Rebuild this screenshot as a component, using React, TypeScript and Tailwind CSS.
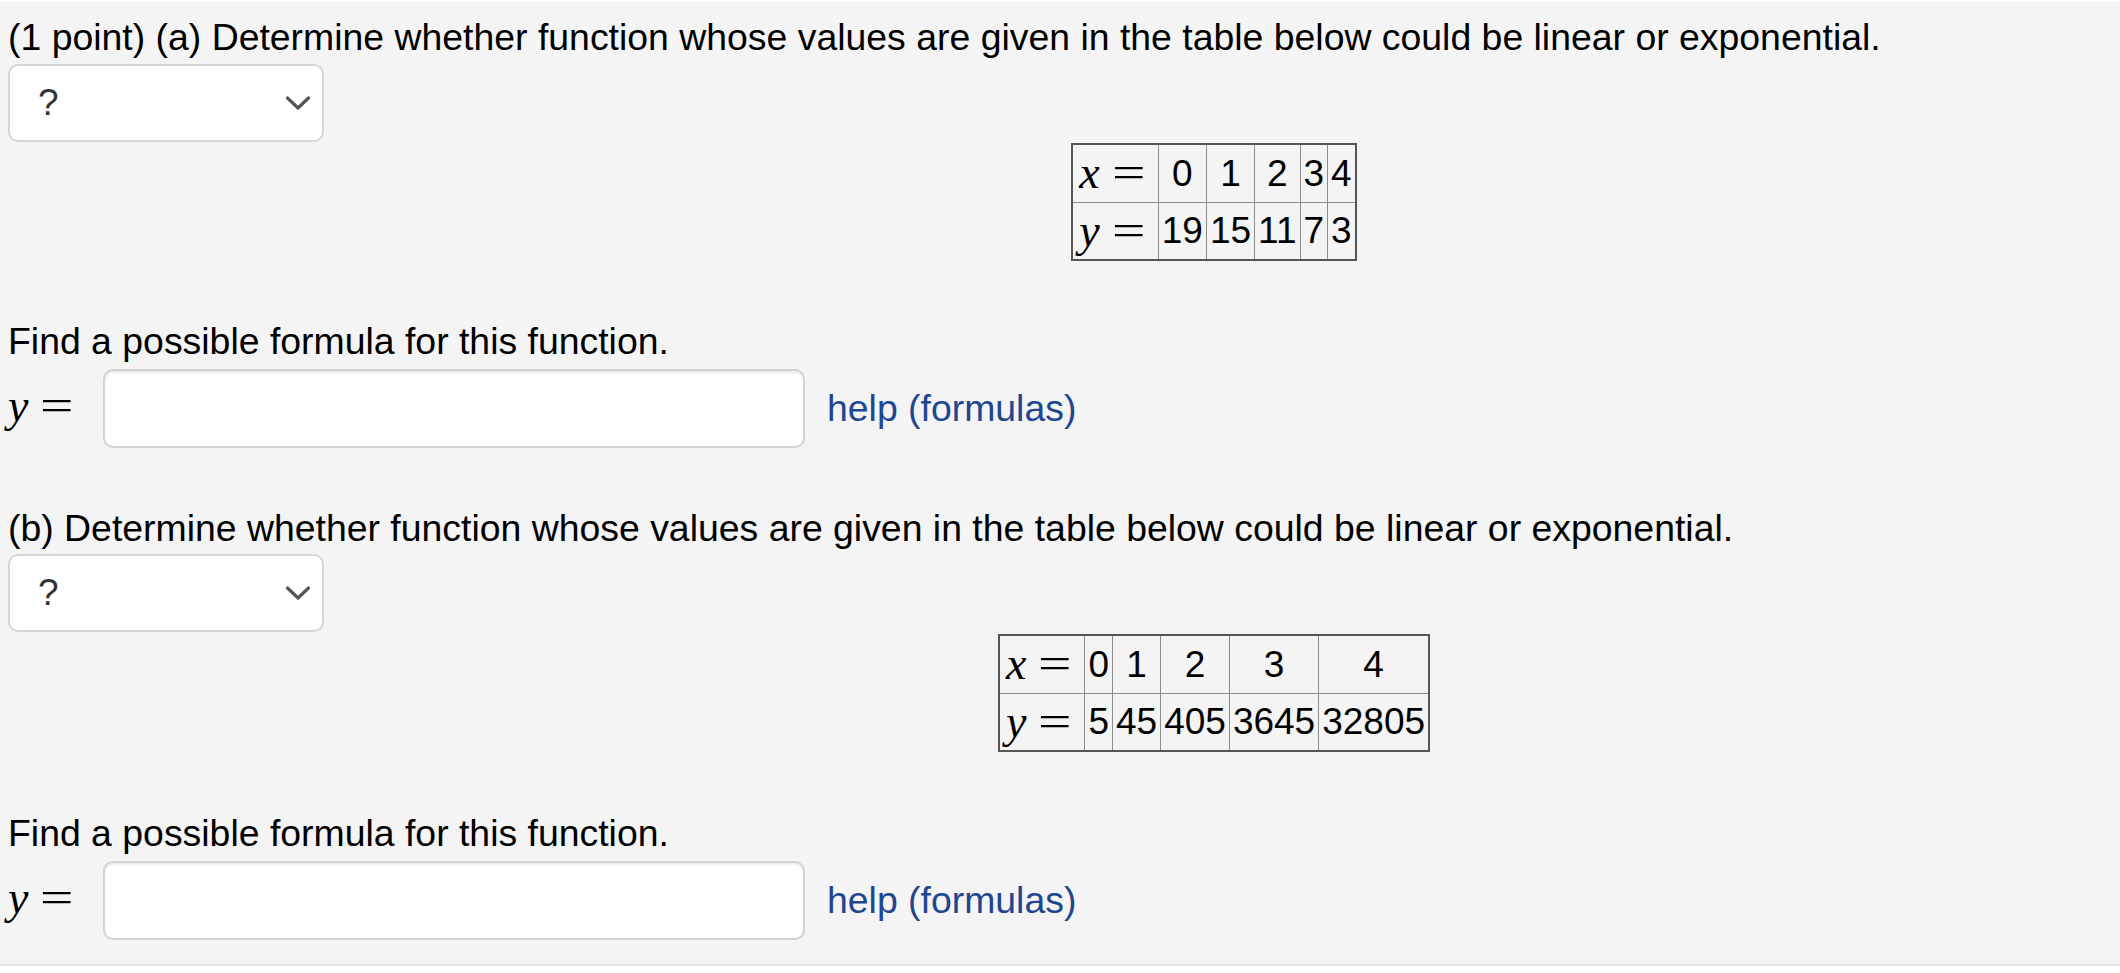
import React from "react";

const sans = { fontFamily: '"Liberation Sans", Arial, sans-serif' };

function MathVar({ v }: { v: string }) {
  return (
    <span className="inline-flex items-center gap-[12px]" style={{ fontFamily: '"Liberation Serif", "DejaVu Serif", serif' }}>
      <span className="italic text-[46px] leading-none">{v}</span>
      <span className="inline-block text-[44px] leading-none scale-x-[1.35] origin-left">=</span>
    </span>
  );
}

function Select() {
  return (
    <div className="ml-[8px] w-[316px] h-[78px] bg-white border-2 border-[#d6d6d6] rounded-[10px] flex items-center justify-between pl-[28px] pr-[11px] text-[#333]">
      <span className="text-[37px]">?</span>
      <svg width="26" height="14" viewBox="0 0 26 14" fill="none">
        <path d="M2.5 2 L13 12 L23.5 2" stroke="#555" strokeWidth="3.2" strokeLinecap="round" strokeLinejoin="round" />
      </svg>
    </div>
  );
}

function ValueTable({ xs, ys }: { xs: string[]; ys: string[] }) {
  const cell = "border-[1.5px] border-[#8c8c8c] px-[3px] h-[58px] text-center";
  const label = "border-[1.5px] border-[#8c8c8c] h-[58px] w-[86px] pl-[6px] text-left";
  return (
    <div className="pl-[308px] flex justify-center">
      <table className="border-collapse border-[2.5px] border-[#555] text-[37px] leading-none text-black">
        <tbody>
          <tr>
            <td className={label}>
              <MathVar v="x" />
            </td>
            {xs.map((x, i) => (
              <td key={i} className={cell}>{x}</td>
            ))}
          </tr>
          <tr>
            <td className={label}>
              <MathVar v="y" />
            </td>
            {ys.map((y, i) => (
              <td key={i} className={cell}>{y}</td>
            ))}
          </tr>
        </tbody>
      </table>
    </div>
  );
}

function Answer() {
  return (
    <div className="mt-[2px] flex items-center h-[79px]">
      <div className="w-[103px] pl-[8px] text-black">
        <MathVar v="y" />
      </div>
      <div className="w-[702px] h-[79px] bg-white border-2 border-[#d2d2d2] rounded-[10px] shadow-[inset_0_2px_2px_rgba(0,0,0,0.08)]" />
      <a className="ml-[22px] text-[37.4px] text-[#20468f]">help (formulas)</a>
    </div>
  );
}

export default function App() {
  return (
    <div className="w-[2120px] h-[973px] bg-white overflow-hidden" style={sans}>
      <div className="mt-[2px] h-[964px] bg-[#f4f4f4] border-b-2 border-[#e2e2e2] text-[37.4px] text-black">
        <div className="pt-[9px] pl-[8px] h-[62px] leading-[52px]">
          (1 point) (a) Determine whether function whose values are given in the table below could be linear or exponential.
        </div>
        <Select />
        <div className="mt-px">
          <ValueTable xs={["0", "1", "2", "3", "4"]} ys={["19", "15", "11", "7", "3"]} />
        </div>
        <div className="mt-[54px] pl-[8px] h-[52px] leading-[52px]">Find a possible formula for this function.</div>
        <Answer />
        <div className="mt-[54px] pl-[8px] h-[52px] leading-[52px]">
          (b) Determine whether function whose values are given in the table below could be linear or exponential.
        </div>
        <Select />
        <div className="mt-[2px]">
          <ValueTable xs={["0", "1", "2", "3", "4"]} ys={["5", "45", "405", "3645", "32805"]} />
        </div>
        <div className="mt-[55px] pl-[8px] h-[52px] leading-[52px]">Find a possible formula for this function.</div>
        <Answer />
      </div>
    </div>
  );
}
